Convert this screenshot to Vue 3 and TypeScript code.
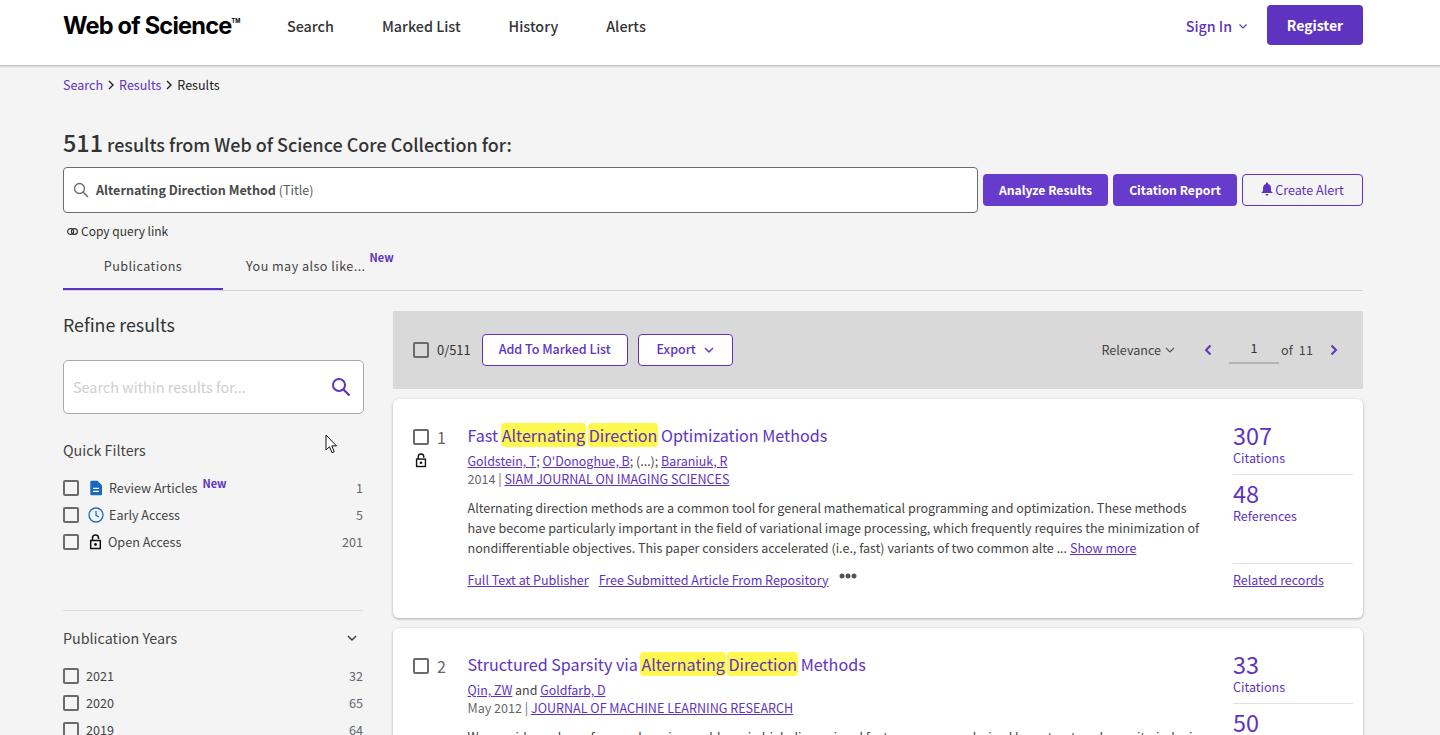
<script setup lang="ts">
interface Filter { label: string; count: string; icon?: string; isNew?: boolean }
const quick: Filter[] = [
  { label: 'Review Articles', count: '1', icon: 'doc', isNew: true },
  { label: 'Early Access', count: '5', icon: 'clock' },
  { label: 'Open Access', count: '201', icon: 'lock' },
]
const years: Filter[] = [
  { label: '2021', count: '32' },
  { label: '2020', count: '65' },
  { label: '2019', count: '64' },
]
const nav = ['Search', 'Marked List', 'History', 'Alerts']
</script>

<template>
  <div class="page">
    <header class="top">
      <div class="logo">Web of Science<sup>TM</sup></div>
      <nav class="nav"><a v-for="n in nav" :key="n">{{ n }}</a></nav>
      <div class="signin">Sign In
        <svg width="10" height="10" viewBox="0 0 10 10"><path d="M1.5 3.5 5 7l3.5-3.5" fill="none" stroke="currentColor" stroke-width="1.2"/></svg>
      </div>
      <button class="register">Register</button>
    </header>

    <div class="wrap">
      <div class="crumbs">
        <a>Search</a>
        <svg width="8" height="10" viewBox="0 0 8 10"><path d="M2 1l4 4-4 4" fill="none" stroke="#222" stroke-width="1.4"/></svg>
        <a>Results</a>
        <svg width="8" height="10" viewBox="0 0 8 10"><path d="M2 1l4 4-4 4" fill="none" stroke="#222" stroke-width="1.4"/></svg>
        <span>Results</span>
      </div>

      <h1 class="heading"><b>511</b> results from Web of Science Core Collection for:</h1>

      <div class="query-row">
        <div class="query">
          <svg width="16" height="16" viewBox="0 0 16 16"><circle cx="6.5" cy="6.5" r="5" fill="none" stroke="#6b6b70" stroke-width="1.3"/><path d="M10.2 10.2 15 15" stroke="#6b6b70" stroke-width="1.5"/></svg>
          <span><b>Alternating Direction Method</b> <i>(Title)</i></span>
        </div>
        <button class="btn solid analyze">Analyze Results</button>
        <button class="btn solid cite">Citation Report</button>
        <button class="btn ghost alert">
          <svg width="12" height="14" viewBox="0 0 12 14"><path d="M6 0.5c.6 0 1 .4 1 1v.5c2 .5 3 2.100 3 4v3l1.500 1.600V11H.5v-.4L2 9V6c0-1.900 1-3.500 3-4v-.5c0-.6.400-1 1-1zM4.500 12h3c0 .9-.6 1.500-1.500 1.500S4.500 12.900 4.500 12z" fill="#5e33bf"/></svg>
          Create Alert
        </button>
      </div>

      <div class="copy">
        <svg width="11" height="7" viewBox="0 0 11 7"><rect x=".6" y=".6" width="6" height="5.800" rx="2.900" fill="none" stroke="#333" stroke-width="1.200"/><rect x="4.400" y=".6" width="6" height="5.800" rx="2.900" fill="none" stroke="#333" stroke-width="1.200"/></svg>
        Copy query link
      </div>

      <div class="tabs">
        <div class="tab active">Publications</div>
        <div class="tab second">You may also like...<sup class="new">New</sup></div>
      </div>

      <div class="columns">
        <aside class="side">
          <h2 class="refine">Refine results</h2>
          <div class="within">
            <span>Search within results for...</span>
            <svg width="20" height="20" viewBox="0 0 20 20"><circle cx="8" cy="8" r="6" fill="none" stroke="#5e33bf" stroke-width="2"/><path d="M12.500 12.500 18.500 18.500" stroke="#5e33bf" stroke-width="2.200"/></svg>
          </div>

          <h3 class="sec quick">Quick Filters</h3>
          <ul class="filters">
            <li v-for="f in quick" :key="f.label">
              <span class="box"></span>
              <svg v-if="f.icon === 'doc'" class="fi" width="16" height="16" viewBox="0 0 16 16"><path d="M3.500 .8h6L14 5.300V14a1.200 1.200 0 0 1-1.200 1.200H3.500A1.200 1.200 0 0 1 2.300 14V2A1.200 1.200 0 0 1 3.500 .8z" fill="#1769c0"/><path d="M5 8.300h6M5 11.300h6" stroke="#fff" stroke-width="1.200"/></svg>
              <svg v-else-if="f.icon === 'clock'" class="fi" width="16" height="16" viewBox="0 0 16 16"><circle cx="8" cy="8" r="7" fill="none" stroke="#1769c0" stroke-width="1.300"/><path d="M8 4v4.300l3 1.700" fill="none" stroke="#1769c0" stroke-width="1.200"/></svg>
              <svg v-else class="fi lockfi" width="13" height="16" viewBox="0 0 13 16"><path d="M3.500 6.500V4a3 3 0 0 1 6 0v1" fill="none" stroke="#111" stroke-width="1.500"/><rect x="1.700" y="6.500" width="9.600" height="8" fill="none" stroke="#111" stroke-width="1.500"/><circle cx="6.500" cy="10.500" r="1.400" fill="#111"/></svg>
              <span class="lbl">{{ f.label }}<sup v-if="f.isNew" class="new">New</sup></span>
              <span class="cnt">{{ f.count }}</span>
            </li>
          </ul>

          <div class="rule"></div>
          <div class="sec years">Publication Years
            <svg width="12" height="12" viewBox="0 0 12 12"><path d="M2 4l4 4 4-4" fill="none" stroke="#333" stroke-width="1.400"/></svg>
          </div>
          <ul class="filters yearlist">
            <li v-for="y in years" :key="y.label">
              <span class="box"></span>
              <span class="lbl">{{ y.label }}</span>
              <span class="cnt">{{ y.count }}</span>
            </li>
          </ul>
        </aside>

        <main class="main">
          <div class="toolbar">
            <span class="box"></span>
            <span class="sel">0/511</span>
            <button class="btn tool add">Add To Marked List</button>
            <button class="btn tool exp">Export
              <svg width="10" height="10" viewBox="0 0 10 10"><path d="M1 3l4 4 4-4" fill="none" stroke="#5e33bf" stroke-width="1.400"/></svg>
            </button>
            <div class="sort">Relevance
              <svg width="10" height="10" viewBox="0 0 10 10"><path d="M1 3l4 4 4-4" fill="none" stroke="#555" stroke-width="1.100"/></svg>
            </div>
            <svg class="pg-l" width="8" height="12" viewBox="0 0 8 12"><path d="M6.500 1.500 2 6l4.500 4.500" fill="none" stroke="#5e33bf" stroke-width="2"/></svg>
            <div class="page-num">1</div>
            <div class="of">of&nbsp; 11</div>
            <svg class="pg-r" width="8" height="12" viewBox="0 0 8 12"><path d="M1.500 1.500 6 6l-4.500 4.500" fill="none" stroke="#5e33bf" stroke-width="2"/></svg>
          </div>

          <article class="card first">
            <div class="left">
              <div class="idx"><span class="box"></span><span class="num">1</span></div>
              <svg class="cardlock" width="12" height="15" viewBox="0 0 13 16"><path d="M3.500 6.500V4a3 3 0 0 1 6 0v1" fill="none" stroke="#111" stroke-width="1.500"/><rect x="1.700" y="6.500" width="9.600" height="8" fill="none" stroke="#111" stroke-width="1.500"/><circle cx="6.500" cy="10.500" r="1.400" fill="#111"/></svg>
            </div>
            <div class="body">
              <h4 class="title">Fast <mark>Alternating</mark> <mark>Direction</mark> Optimization Methods</h4>
              <div class="authors"><a>Goldstein, T</a>; <a>O'Donoghue, B</a>; (...); <a>Baraniuk, R</a></div>
              <div class="src">2014 | <a>SIAM JOURNAL ON IMAGING SCIENCES</a></div>
              <p class="abs">Alternating direction methods are a common tool for general mathematical programming and optimization. These methods have become particularly important in the field of variational image processing, which frequently requires the minimization of nondifferentiable objectives. This paper considers accelerated (i.e., fast) variants of two common alte ... <a>Show more</a></p>
              <div class="links">
                <a>Full Text at Publisher</a><a>Free Submitted Article From Repository</a>
                <svg class="dots" width="18" height="6" viewBox="0 0 18 6"><circle cx="3" cy="3" r="2.500" fill="#555"/><circle cx="9" cy="3" r="2.500" fill="#555"/><circle cx="15" cy="3" r="2.500" fill="#555"/></svg>
              </div>
            </div>
            <div class="stats">
              <div class="n">307</div><div class="s">Citations</div>
              <div class="div"></div>
              <div class="n">48</div><div class="s">References</div>
              <div class="div low"></div>
              <a class="rel">Related records</a>
            </div>
          </article>

          <article class="card">
            <div class="left">
              <div class="idx"><span class="box"></span><span class="num">2</span></div>
            </div>
            <div class="body">
              <h4 class="title">Structured Sparsity via <mark>Alternating</mark> <mark>Direction</mark> Methods</h4>
              <div class="authors"><a>Qin, ZW</a> and <a>Goldfarb, D</a></div>
              <div class="src">May 2012 | <a>JOURNAL OF MACHINE LEARNING RESEARCH</a></div>
              <p class="abs">We consider a class of sparse learning problems in high dimensional feature space regularized by a structured sparsity-inducing norm that incorporates prior knowledge of the group structure of the features.</p>
            </div>
            <div class="stats">
              <div class="n">33</div><div class="s">Citations</div>
              <div class="div"></div>
              <div class="n">50</div><div class="s">References</div>
            </div>
          </article>
        </main>
      </div>
    </div>

    <svg class="cursor" width="13" height="20" viewBox="0 0 13 20"><path d="M1 1v15l3.500-3.300 2.500 6 2.300-1-2.500-5.800H11.500z" fill="#fff" stroke="#111" stroke-width="1"/></svg>
  </div>
</template>

<style>
html, body { margin: 0; background: #f4f4f4; }
</style>

<style scoped>
.page {
  position: relative;
  height: 735px;
  overflow: hidden;
  background: #f4f4f4;
  color: #333;
  font-family: "Noto Sans CJK SC", "Noto Sans", sans-serif;
  font-size: 12.6px;
  line-height: 20px;
}
a { color: #5e33bf; }
button { font-family: inherit; cursor: pointer; }
h1, h2, h3, h4, p, ul { margin: 0; padding: 0; font-weight: 400; }
ul { list-style: none; }

.top {
  height: 65px;
  background: #fff;
  border-bottom: 1px solid #c4c4c4;
  box-shadow: 0 1px 2px rgba(0,0,0,.12);
  display: flex;
  align-items: flex-start;
  padding: 0 77px 0 63px;
}
.logo {
  font-family: Inter, "Liberation Sans", sans-serif;
  font-weight: 700;
  font-size: 23.6px;
  line-height: 51px;
  letter-spacing: -0.8px;
  color: #000;
  width: 224px;
  white-space: nowrap;
}
.logo sup { font-size: 5.5px; line-height: 0; vertical-align: 11px; letter-spacing: 0; }
.nav { display: flex; gap: 48px; font-size: 14.35px; line-height: 52px; font-weight: 500; }
.nav a { color: #333; }
.signin {
  margin-left: auto;
  color: #5e33bf;
  font-size: 14.2px;
  line-height: 52px;
  font-weight: 500;
  display: flex;
  align-items: center;
  gap: 6px;
}
.register {
  margin: 5px 0 0 19px;
  width: 96px;
  height: 40px;
  border: 0;
  border-radius: 4px;
  background: #5e33bf;
  color: #fff;
  font-size: 14px;
  font-weight: 700;
}

.wrap { padding: 0 77px 0 63px; }
.crumbs { display: flex; align-items: center; gap: 4px; height: 38px; color: #222; font-size: 12.55px; }
.crumbs a { color: #5e33bf; }

.heading { margin-top: 18px; height: 40px; line-height: 40px; font-size: 17.95px; font-weight: 500; color: #333; }
.heading b { font-size: 23.4px; font-weight: 500; }

.query-row { display: flex; align-items: center; height: 46px; margin-top: 5px; }
.query {
  width: 915px;
  height: 46px;
  box-sizing: border-box;
  background: #fff;
  border: 1px solid #6b6b76;
  border-radius: 4px;
  display: flex;
  align-items: center;
  gap: 7px;
  padding-left: 9px;
  color: #5a5a5a;
}
.query b { font-weight: 700; color: #4a4a4a; }
.query i { font-style: normal; }
.btn {
  height: 32px;
  box-sizing: border-box;
  border-radius: 4px;
  font-size: 12.2px;
  font-weight: 700;
  padding: 0;
  display: flex;
  align-items: center;
  justify-content: center;
  white-space: nowrap;
}
.solid { background: #673ccc; color: #fff; border: 0; }
.analyze { width: 125px; margin-left: 5px; }
.cite { width: 124px; margin-left: 5px; }
.ghost { background: transparent; border: 1px solid #5e33bf; color: #5e33bf; font-weight: 400; font-size: 12.6px; padding-bottom: 2px; }
.alert { width: 121px; margin-left: 5px; gap: 2px; }

.copy { display: flex; align-items: center; gap: 3px; padding-left: 4px; margin-top: 8px; height: 20px; font-size: 12px; color: #333; }

.tabs { display: flex; height: 49px; border-bottom: 1px solid #d4d4d4; }
.tab { letter-spacing: .45px; color: #444; }
.tab.active {
  width: 160px;
  box-sizing: border-box;
  text-align: center;
  padding-top: 15px;
  border-bottom: 2px solid #5e33bf;
  height: 49px;
}
.tab.second { margin-left: 23px; padding-top: 15px; white-space: nowrap; }
.new { font-size: 11px; font-weight: 700; color: #5e33bf; line-height: 0; margin-left: 4px; letter-spacing: 0; }
.tab .new { vertical-align: 9px; }
.lbl .new { vertical-align: 5px; margin-left: 5px; }

.columns { display: flex; gap: 30px; align-items: flex-start; }
.side { width: 300px; flex: none; }
.refine { font-size: 17.8px; line-height: 28px; margin-top: 19px; color: #333; }
.within {
  margin-top: 22px;
  height: 54px;
  width: 301px;
  box-sizing: border-box;
  background: #fff;
  border: 1px solid #a9a9b0;
  border-radius: 5px;
  display: flex;
  align-items: center;
  justify-content: space-between;
  padding: 0 12px 0 9px;
  font-size: 14.4px;
  color: #cfcfcf;
}
.sec { font-size: 14.3px; line-height: 22px; color: #444; }
.quick { margin-top: 25px; }
.filters { margin-top: 13px; }
.filters li { display: flex; align-items: center; height: 27px; }
.box {
  display: inline-block;
  flex: none;
  width: 16px;
  height: 16px;
  box-sizing: border-box;
  border: 2px solid #6a6a6a;
  border-radius: 2px;
}
.fi { margin-left: 9px; flex: none; }
.lockfi { margin-left: 10px; margin-right: 1px; }
.lbl { margin-left: 5px; color: #444; white-space: nowrap; }
.cnt { margin-left: auto; color: #66666e; }
.rule { height: 1px; background: #dcdce4; margin-top: 55px; }
.years { margin-top: 16px; display: flex; justify-content: space-between; align-items: center; padding-right: 5px; }
.yearlist { margin-top: 13px; }
.yearlist .lbl { margin-left: 7px; }

.main { flex: 1; min-width: 0; padding-top: 20px; }
.toolbar { height: 78px; background: #d9d9d9; display: flex; align-items: center; padding-left: 20px; position: relative; }
.sel { margin-left: 8px; color: #333; font-size: 12.9px; }
.tool { background: #fff; border: 1px solid #5e33bf; color: #5e33bf; font-weight: 500; font-size: 12.5px; padding-bottom: 3px; }
.tool svg { margin-top: 3px; }
.add { margin-left: 11px; width: 146px; }
.exp { margin-left: 10px; width: 95px; gap: 8px; }
.sort { margin-left: auto; color: #444; display: flex; align-items: center; gap: 4px; }
.pg-l { margin-left: 29px; }
.page-num { width: 50px; margin-left: 17px; border-bottom: 2px solid #b4b4b4; text-align: center; line-height: 22px; height: 25px; color: #333; }
.of { margin-left: 2px; color: #444; letter-spacing: .1px; }
.pg-r { margin-left: 17px; margin-right: 25px; }

.card {
  margin-top: 10px;
  background: #fff;
  border-radius: 6px;
  box-shadow: 0 1px 3px rgba(0,0,0,.3);
  display: flex;
  padding: 0 10px 0 20px;
  height: 219px;
  box-sizing: border-box;
}
.left { width: 54.5px; flex: none; padding-top: 28px; }
.idx { display: flex; align-items: center; height: 20px; }
.num { margin-left: 8px; font-size: 16px; color: #66666e; }
.cardlock { display: block; margin: 6px 0 0 2px; }
.body { width: 740px; flex: none; padding-top: 23px; }
.title { font-size: 16.12px; line-height: 26px; color: #5e33bf; white-space: nowrap; }
mark { background: #fff84f; color: #5e33bf; border-radius: 4px; padding: 0 1px; margin: 0 -1px; }
.authors { margin-top: 4px; line-height: 18px; color: #444; white-space: nowrap; font-size: 12.45px; }
.authors a, .src a, .abs a, .links a, .rel { text-decoration: underline; }
.src { line-height: 18px; color: #66666e; white-space: nowrap; font-size: 12.55px; }
.abs { margin-top: 10px; line-height: 20px; color: #444; font-size: 12.55px; }
.links { margin-top: 12px; display: flex; align-items: flex-start; gap: 10px; white-space: nowrap; font-size: 12.55px; }
.dots { margin-top: 3px; margin-left: 1px; }
.stats { margin-left: 25.5px; width: 120px; flex: none; padding-top: 22px; }
.n { font-size: 23.4px; line-height: 28px; color: #5e33bf; }
.s { color: #5e33bf; line-height: 16px; margin-top: 1px; font-size: 12.55px; }
.div { height: 1px; background: #e0e0e8; margin: 8px 0 4px; }
.div.low { margin: 39px 0 6px; }
.rel { display: block; color: #5e33bf; font-size: 12.5px; }

.cursor { position: absolute; left: 325px; top: 434px; }
</style>
